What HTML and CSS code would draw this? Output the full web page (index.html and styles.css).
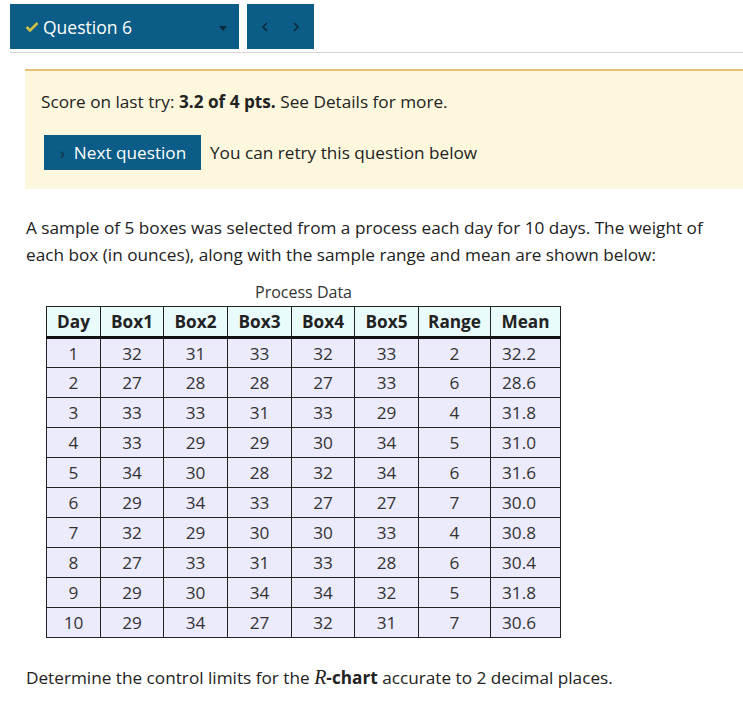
FILE: index.html
```
<!DOCTYPE html>
<html>
<head>
<meta charset="utf-8">
<link rel="stylesheet" href="styles.css">
</head>
<body>
<div class="topbar">
  <div class="qselect">
    <svg class="check" width="14" height="12" viewBox="0 0 14 12"><path d="M1.5 6 L5 9.5 L12.5 2" fill="none" stroke="#cfc243" stroke-width="2.6"/></svg>
    <span class="qlabel">Question 6</span>
    <span class="caret"></span>
  </div>
  <div class="qnav">
    <svg width="8" height="10" viewBox="0 0 8 10"><path d="M6 1 L2 5 L6 9" fill="none" stroke="#0d2a3a" stroke-width="1.6"/></svg>
    <svg width="8" height="10" viewBox="0 0 8 10"><path d="M2 1 L6 5 L2 9" fill="none" stroke="#0d2a3a" stroke-width="1.6"/></svg>
  </div>
</div>
<div class="rule"></div>
<div class="scorebox">
  <p class="score">Score on last try: <b>3.2 of 4 pts.</b> See Details for more.</p>
  <div class="nextrow">
    <span class="nextbtn"><span class="chev">›</span>Next question</span>
    <span class="retry">You can retry this question below</span>
  </div>
</div>
<p class="intro">A sample of 5 boxes was selected from a process each day for 10 days. The weight of each box (in ounces), along with the sample range and mean are shown below:</p>
<table class="data">
  <caption>Process Data</caption>
  <thead>
    <tr><th class="c0">Day</th><th class="c1">Box1</th><th class="c2">Box2</th><th class="c3">Box3</th><th class="c4">Box4</th><th class="c5">Box5</th><th class="c6">Range</th><th class="c7">Mean</th></tr>
  </thead>
  <tbody>
    <tr><td>1</td><td>32</td><td>31</td><td>33</td><td>32</td><td>33</td><td>2</td><td class="mean">32.2</td></tr>
    <tr><td>2</td><td>27</td><td>28</td><td>28</td><td>27</td><td>33</td><td>6</td><td class="mean">28.6</td></tr>
    <tr><td>3</td><td>33</td><td>33</td><td>31</td><td>33</td><td>29</td><td>4</td><td class="mean">31.8</td></tr>
    <tr><td>4</td><td>33</td><td>29</td><td>29</td><td>30</td><td>34</td><td>5</td><td class="mean">31.0</td></tr>
    <tr><td>5</td><td>34</td><td>30</td><td>28</td><td>32</td><td>34</td><td>6</td><td class="mean">31.6</td></tr>
    <tr><td>6</td><td>29</td><td>34</td><td>33</td><td>27</td><td>27</td><td>7</td><td class="mean">30.0</td></tr>
    <tr><td>7</td><td>32</td><td>29</td><td>30</td><td>30</td><td>33</td><td>4</td><td class="mean">30.8</td></tr>
    <tr><td>8</td><td>27</td><td>33</td><td>31</td><td>33</td><td>28</td><td>6</td><td class="mean">30.4</td></tr>
    <tr><td>9</td><td>29</td><td>30</td><td>34</td><td>34</td><td>32</td><td>5</td><td class="mean">31.8</td></tr>
    <tr><td>10</td><td>29</td><td>34</td><td>27</td><td>32</td><td>31</td><td>7</td><td class="mean">30.6</td></tr>
  </tbody>
</table>
<p class="determine">Determine the control limits for the <i class="math">R</i><b>-chart</b> accurate to 2 decimal places.</p>
</body>
</html>
```

FILE: styles.css
```
* { box-sizing: border-box; }
body {
  margin: 0;
  font-family: "Open Sans", "Noto Sans", sans-serif;
  font-size: 17.2px;
  color: #222;
  background: #fff;
}
.topbar {
  display: flex;
  gap: 8px;
  padding: 4px 0 0 10px;
  height: 49px;
}
.qselect {
  width: 229px;
  height: 45px;
  background: #0b5c86;
  color: #fff;
  display: flex;
  align-items: center;
  padding: 0 10px 0 15px;
}
.check { margin-right: 4px; margin-top: 1px; }
.qlabel { font-size: 17.5px; flex: 1; }
.caret {
  width: 0; height: 0;
  border-left: 4px solid transparent;
  border-right: 4px solid transparent;
  border-top: 5px solid #0d2a3a;
  margin-right: 2px;
  margin-top: 3px;
}
.qnav {
  width: 67px;
  height: 45px;
  background: #0b5c86;
  display: flex;
  align-items: center;
  justify-content: center;
  gap: 23px;
}
.rule {
  margin: 3px 0 0 10px;
  height: 1px;
  background: #d9d4d4;
}
.scorebox {
  margin: 16px 0 0 25px;
  background: #fdf8dd;
  border-top: 2px solid #e5c071;
  padding: 20px 16px 18px 16px;
  height: 120px;
}
.score { margin: 0; line-height: 22px; }
.nextrow {
  display: flex;
  align-items: center;
  margin-top: 22px;
  padding-left: 3px;
}
.nextbtn {
  background: #0b5c86;
  color: #fff;
  height: 35px;
  width: 157px;
  display: flex;
  align-items: center;
  padding-left: 16px;
}
.chev { color: #0d2a3a; margin-right: 9px; font-size: 16px; }
.retry { margin-left: 9px; color: #222; }
.intro {
  margin: 25px 20px 0 26px;
  line-height: 27px;
}
.data {
  margin: 13px 0 0 46px;
  border-collapse: collapse;
}
.data caption {
  font-size: 16px;
  color: #333;
  line-height: 22px;
  padding-bottom: 3px;
}
.data th, .data td {
  border: 1px solid #222;
  height: 30px;
  padding: 0;
  text-align: center;
}
.data th {
  background: #eafbfb;
  font-weight: 700;
  height: 31px;
  border-bottom: 3px solid #111;
  color: #222;
}
.data td { background: #ecebfc; color: #333; font-weight: 400; }
.data td.mean { text-align: left; padding-left: 11px; }
.c0 { width: 54px; }
.c1 { width: 63px; }
.c2 { width: 64px; }
.c3 { width: 64px; }
.c4 { width: 63px; }
.c5 { width: 64px; }
.c6 { width: 72px; }
.c7 { width: 70px; }
.determine {
  margin: 28px 0 0 26px;
}
.math { font-family: "Liberation Serif", "DejaVu Serif", serif; font-size: 20px; }
```
